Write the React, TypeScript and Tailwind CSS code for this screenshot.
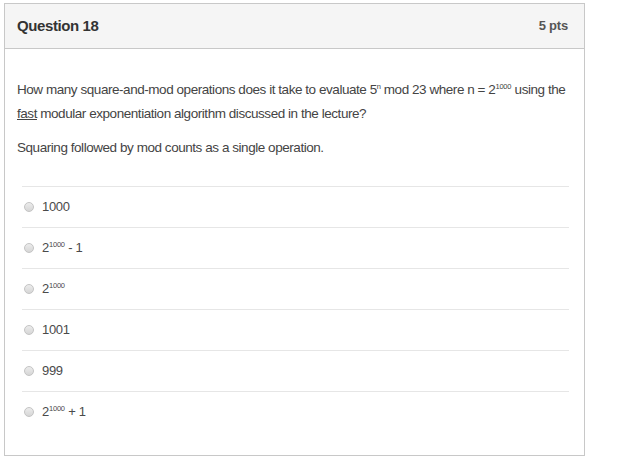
import React from 'react';

const font = { fontFamily: '"Liberation Sans", Arial, sans-serif' };

function Pow({ base, exp }: { base: string; exp: string }) {
    return (
        <span>
            {base}
            <sup className="text-[7.5px] tracking-[-0.2px] -top-[5px]">{exp}</sup>
        </span>
    );
}

const answers: React.ReactNode[] = [
    '1000',
    <>
        <Pow base="2" exp="1000" /> - 1
    </>,
    <Pow base="2" exp="1000" />,
    '1001',
    '999',
    <>
        <Pow base="2" exp="1000" /> + 1
    </>,
];

export default function App() {
    return (
        <div className="w-[617px] h-[459px] bg-white pt-[3px] pl-[4px]" style={font}>
            <div className="w-[581px] border border-[#c8c8c8] bg-white">
                <div className="h-[45px] bg-[#f5f5f5] border-b border-[#c8c8c8] flex items-center justify-between pl-[12px] pr-[16px]">
                    <span className="text-[15px] font-bold tracking-[-0.4px] text-[#333]">Question 18</span>
                    <span className="text-[13px] font-bold tracking-[-0.2px] text-[#555]">5 pts</span>
                </div>
                <div className="pt-[29px] pb-[23px] px-[12px] text-[#444] text-[13.5px] tracking-[-0.45px]">
                    <p className="leading-[24px]">
                        How many square-and-mod operations does it take to evaluate 5
                        <sup className="text-[7.5px] -top-[5px]">n</sup> mod 23 where n = <Pow base="2" exp="1000" /> using the{' '}
                        <span className="underline">fast</span> modular exponentiation algorithm discussed in the lecture?
                    </p>
                    <p className="leading-[24px] mt-[10px]">Squaring followed by mod counts as a single operation.</p>
                    <div className="mt-[26px] ml-[5px] mr-[3px]">
                        {answers.map((a, i) => (
                            <div
                                key={i}
                                className="h-[41px] border-t border-[#e6e6e6] flex items-center pl-[2px] text-[13px] tracking-[-0.3px] text-[#4a4a4a]"
                            >
                                <span className="w-[10px] h-[10px] rounded-full border border-[#c4c4c4] bg-gradient-to-b from-[#ececec] to-[#d6d6d6] mr-[8px]" />
                                <span>{a}</span>
                            </div>
                        ))}
                    </div>
                </div>
            </div>
        </div>
    );
}
